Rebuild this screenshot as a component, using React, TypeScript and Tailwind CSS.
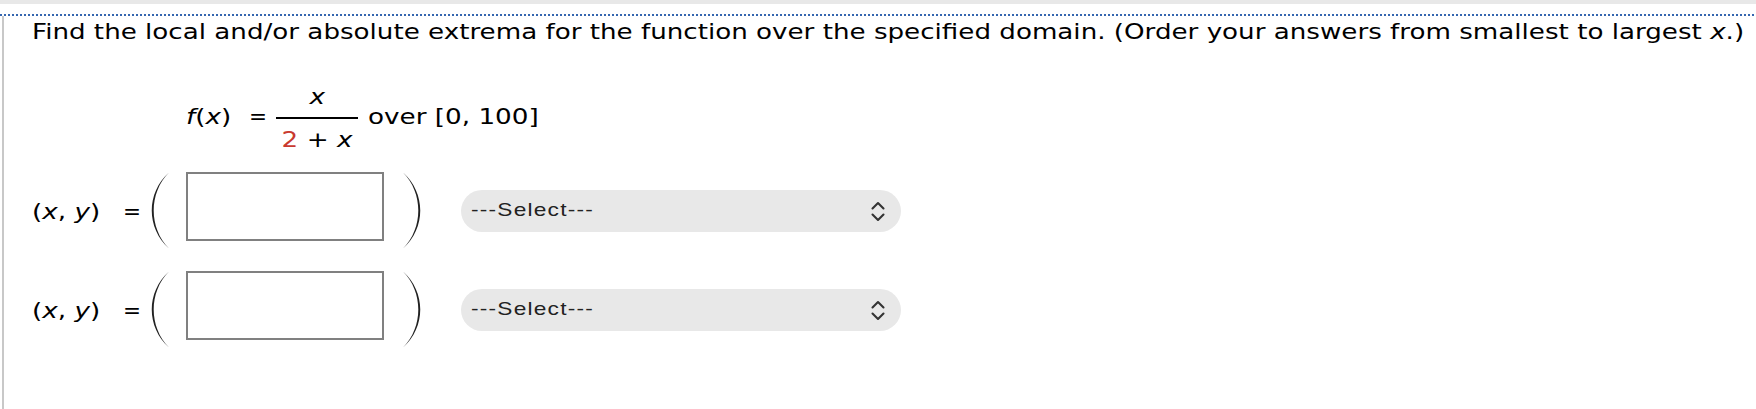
import React from "react"

// the source page is rendered a little wide, so text is stretched horizontally
function Wide({ children, center = false }: { children: React.ReactNode; center?: boolean }) {
  return (
    <span className={"inline-block whitespace-nowrap scale-x-[1.22] " + (center ? "origin-center" : "origin-left")}>
      {children}
    </span>
  )
}

// stretched math parenthesis drawn as a crescent
function Paren({ right = false }: { right?: boolean }) {
  return (
    <svg width="19" height="77" viewBox="0 0 19 77" className={"shrink-0 " + (right ? "-scale-x-100" : "")}>
      <path d="M18 0.5 C -5 21 -5 56 18 76.5 C -2.4 56 -2.4 21 18 0.5 Z" fill="#222" />
    </svg>
  )
}

function UpDown() {
  return (
    <svg width="14" height="21" viewBox="0 0 14 21" fill="none" stroke="#333" strokeWidth="2.1" strokeLinecap="round" strokeLinejoin="round">
      <path d="M1.5 7.5 L7 2 L12.5 7.5" />
      <path d="M1.5 13.5 L7 19 L12.5 13.5" />
    </svg>
  )
}

function AnswerRow() {
  return (
    <div className="flex items-start h-[77px]">
      <div className="w-[91px] shrink-0 mt-[28.5px] leading-[22px]">
        <Wide>
          (<i>x</i>, <i>y</i>)
        </Wide>
      </div>
      <div className="w-[28px] shrink-0 mt-[28.5px] leading-[22px]">=</div>
      <Paren />
      <div className="ml-[16px] shrink-0 w-[198px] h-[69px] border-2 border-[#808080] bg-white" />
      <div className="ml-[18px] shrink-0">
        <Paren right />
      </div>
      <div className="ml-[40px] mt-[18px] shrink-0 w-[440px] h-[42px] rounded-full bg-[#e8e8e8] flex items-center justify-between pl-[10px] pr-[16px] font-['Liberation_Sans',Arial,sans-serif] text-[18.6px] text-[#222]">
        <span className="mb-[3px] leading-[22px]">
          <Wide>
            <span className="tracking-[1px]">---Select---</span>
          </Wide>
        </span>
        <UpDown />
      </div>
    </div>
  )
}

export default function App() {
  return (
    <div className="min-h-[409px] bg-white text-black font-['DejaVu_Sans',Verdana,sans-serif] text-[21.5px]">
      <div className="h-1 bg-[#e8e8e8]" />
      <div className="mt-[10px] h-[2px] bg-[linear-gradient(to_right,#3566b0_60%,transparent_60%)] bg-[length:4px_2px]" />
      <div className="ml-[2px] border-l-2 border-[#c8c8c8] min-h-[393px] pl-[28px]">
        <div className="pt-[4px] leading-[24px]">
          <span className="inline-block whitespace-nowrap scale-x-[1.216] origin-left">
            Find the local and/or absolute extrema for the function over the specified domain. (Order your answers from smallest to largest <i>x</i>.)
          </span>
        </div>

        <div className="mt-[42px] ml-[154px] flex items-start h-[64.5px]">
          <div className="w-[64px] shrink-0 mt-[19.6px] leading-[22px]">
            <Wide>
              <i>f</i>(<i>x</i>)
            </Wide>
          </div>
          <div className="w-[26px] shrink-0 mt-[19.6px] leading-[22px] -ml-[1px]">=</div>
          <div className="w-[82px] shrink-0 flex flex-col items-center ml-[1px]">
            <div className="h-[22px] leading-[22px]">
              <Wide center>
                <i>x</i>
              </Wide>
            </div>
            <div className="mt-[9px] w-full h-[1.5px] bg-black" />
            <div className="mt-[10px] h-[22px] leading-[22px]">
              <Wide center>
                <span className="text-[#c93a2f]">2</span> + <i>x</i>
              </Wide>
            </div>
          </div>
          <div className="ml-[10px] mt-[19.6px] leading-[22px]">
            <Wide>over [0, 100]</Wide>
          </div>
        </div>

        <div className="mt-[21.5px] flex flex-col gap-[22px]">
          <AnswerRow />
          <AnswerRow />
        </div>
      </div>
    </div>
  )
}
